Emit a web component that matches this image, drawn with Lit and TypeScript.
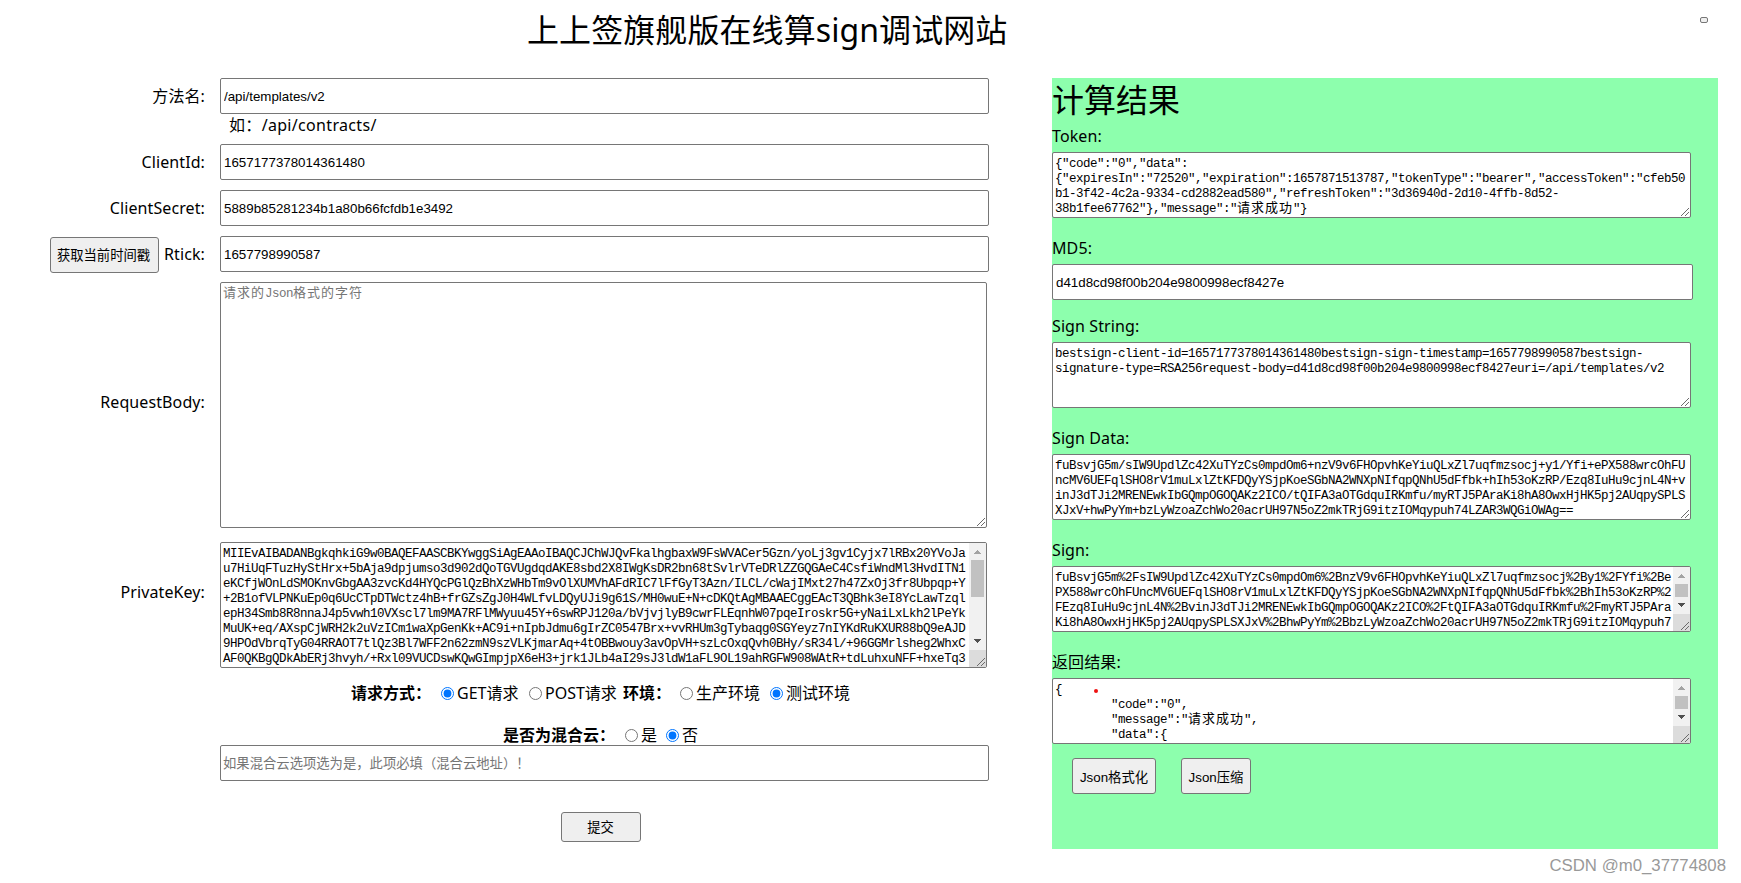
import { LitElement, html, css, svg, nothing } from "lit";
import { customElement, property } from "lit/decorators.js";

const PRIVATE_KEY = [
  "MIIEvAIBADANBgkqhkiG9w0BAQEFAASCBKYwggSiAgEAAoIBAQCJChWJQvFkalhgbaxW9FsWVACer5Gzn/yoLj3gv1Cyjx7lRBx20YVoJa",
  "u7HiUqFTuzHyStHrx+5bAja9dpjumso3d902dQoTGVUgdqdAKE8sbd2X8IWgKsDR2bn68tSvlrVTeDRlZZGQGAeC4CsfiWndMl3HvdITN1",
  "eKCfjWOnLdSMOKnvGbgAA3zvcKd4HYQcPGlQzBhXzWHbTm9vOlXUMVhAFdRIC7lFfGyT3Azn/ILCL/cWajIMxt27h47ZxOj3fr8Ubpqp+Y",
  "+2B1ofVLPNKuEp0q6UcCTpDTWctz4hB+frGZsZgJ0H4WLfvLDQyUJi9g61S/MH0wuE+N+cDKQtAgMBAAECggEAcT3QBhk3eI8YcLawTzql",
  "epH34Smb8R8nnaJ4p5vwh10VXscl7lm9MA7RFlMWyuu45Y+6swRPJ120a/bVjvjlyB9cwrFLEqnhW07pqeIroskr5G+yNaiLxLkh2lPeYk",
  "MuUK+eq/AXspCjWRH2k2uVzICm1waXpGenKk+AC9i+nIpbJdmu6gIrZC0547Brx+vvRHUm3gTybaqg0SGYeyz7nIYKdRuKXUR88bQ9eAJD",
  "9HPOdVbrqTyG04RRAOT7tlQz3Bl7WFF2n62zmN9szVLKjmarAq+4tOBBwouy3avOpVH+szLcOxqQvh0BHy/sR34l/+96GGMrlsheg2WhxC",
  "AF0QKBgQDkAbERj3hvyh/+Rxl09VUCDswKQwGImpjpX6eH3+jrk1JLb4aI29sJ3ldW1aFL9OL19ahRGFW908WAtR+tdLuhxuNFF+hxeTq3",
];

const TOKEN = [
  '{"code":"0","data":',
  '{"expiresIn":"72520","expiration":1657871513787,"tokenType":"bearer","accessToken":"cfeb50',
  'b1-3f42-4c2a-9334-cd2882ead580","refreshToken":"3d36940d-2d10-4ffb-8d52-',
  '38b1fee67762"},"message":"请求成功"}',
];

const SIGN_STRING = [
  "bestsign-client-id=1657177378014361480bestsign-sign-timestamp=1657798990587bestsign-",
  "signature-type=RSA256request-body=d41d8cd98f00b204e9800998ecf8427euri=/api/templates/v2",
];

const SIGN_DATA = [
  "fuBsvjG5m/sIW9UpdlZc42XuTYzCs0mpdOm6+nzV9v6FHOpvhKeYiuQLxZl7uqfmzsocj+y1/Yfi+ePX588wrcOhFU",
  "ncMV6UEFqlSHO8rV1muLxlZtKFDQyYSjpKoeSGbNA2WNXpNIfqpQNhU5dFfbk+hIh53oKzRP/Ezq8IuHu9cjnL4N+v",
  "inJ3dTJi2MRENEwkIbGQmpOGOQAKz2ICO/tQIFA3aOTGdquIRKmfu/myRTJ5PAraKi8hA8OwxHjHK5pj2AUqpySPLS",
  "XJxV+hwPyYm+bzLyWzoaZchWo20acrUH97N5oZ2mkTRjG9itzIOMqypuh74LZAR3WQGiOWAg==",
];

const SIGN = [
  "fuBsvjG5m%2FsIW9UpdlZc42XuTYzCs0mpdOm6%2BnzV9v6FHOpvhKeYiuQLxZl7uqfmzsocj%2By1%2FYfi%2Be",
  "PX588wrcOhFUncMV6UEFqlSHO8rV1muLxlZtKFDQyYSjpKoeSGbNA2WNXpNIfqpQNhU5dFfbk%2BhIh53oKzRP%2",
  "FEzq8IuHu9cjnL4N%2BvinJ3dTJi2MRENEwkIbGQmpOGOQAKz2ICO%2FtQIFA3aOTGdquIRKmfu%2FmyRTJ5PAra",
  "Ki8hA8OwxHjHK5pj2AUqpySPLSXJxV%2BhwPyYm%2BbzLyWzoaZchWo20acrUH97N5oZ2mkTRjG9itzIOMqypuh7",
];

const RESULT = ["{", '        "code":"0",', '        "message":"请求成功",', '        "data":{'];

const GRIP = [
  ...Array.from({ length: 8 }, (_, i) => [i, 7 - i]),
  ...Array.from({ length: 4 }, (_, i) => [4 + i, 7 - i]),
];

/** Multi-line text box with a resize grip and an optional scrollbar. */
@customElement("text-box")
export class TextBox extends LitElement {
  @property({ attribute: false }) lines: string[] = [];
  @property({ type: Boolean }) scroll = false;
  @property({ type: Boolean, reflect: true }) hint = false;

  static styles = css`
    :host {
      display: flex;
      box-sizing: border-box;
      border: 1px solid #767676;
      border-radius: 2px;
      background: #fff;
      position: relative;
      overflow: hidden;
      color: #000;
    }
    :host([hint]) {
      color: #757575;
    }
    .text {
      flex: 1;
      min-width: 0;
      padding: 4px 2px 0;
      font: 12.5px/15px "Liberation Mono", "Noto Sans CJK SC", monospace;
      letter-spacing: -0.5px;
    }
    .line {
      height: 15px;
      white-space: pre;
    }
    .cjk {
      font: 13px/1px "Noto Sans CJK SC", sans-serif;
      letter-spacing: 1px;
    }
    .bar {
      width: 17px;
      display: flex;
      flex-direction: column;
      background: #f1f1f1;
    }
    .arrow {
      display: block;
      width: 17px;
      height: 17px;
    }
    .track {
      flex: 1;
      padding: 0 2px;
    }
    .thumb {
      height: var(--thumb, 13px);
      background: #c1c1c1;
    }
    .corner {
      height: 17px;
      background: #dcdcdc;
    }
    .grip {
      position: absolute;
      right: 1px;
      bottom: 1px;
      width: 8px;
      height: 8px;
    }
  `;

  private segments(line: string) {
    return line
      .split(/([\u4e00-\u9fff]+)/)
      .map((part) => (/[\u4e00-\u9fff]/.test(part) ? html`<span class="cjk">${part}</span>` : part));
  }

  render() {
    return html`<div class="text">${this.lines.map((l) => html`<div class="line">${this.segments(l)}</div>`)}</div>
      ${this.scroll
        ? html`<div class="bar">
            <svg class="arrow" viewBox="0 0 17 17" shape-rendering="crispEdges" fill="#a3a3a3">
              <path d="M8 7h1v1h1v1h1v1h1v1H5v-1h1V9h1V8h1z" />
            </svg>
            <div class="track"><div class="thumb"></div></div>
            <svg class="arrow" viewBox="0 0 17 17" shape-rendering="crispEdges" fill="#505050">
              <path d="M5 6h7v1h-1v1h-1v1H9v1H8V9H7V8H6V7H5z" />
            </svg>
            <div class="corner"></div>
          </div>`
        : nothing}
      <svg class="grip" viewBox="0 0 8 8" shape-rendering="crispEdges" fill="#6b6b6b">
        ${GRIP.map(([x], i) => svg`<rect x=${x} y=${i < 8 ? 7 - x : 11 - x} width="1" height="1" />`)}
      </svg>`;
  }
}

@customElement("app-root")
export class AppRoot extends LitElement {
  static styles = css`
    :host {
      display: block;
      height: 883px;
      overflow: hidden;
      background: #fff;
      color: #000;
      font: 16px/22px "Noto Sans", "Noto Sans CJK SC", sans-serif;
    }
    * {
      box-sizing: border-box;
    }
    .header {
      height: 78px;
      display: flex;
      justify-content: space-between;
      align-items: flex-start;
      padding: 17px 33px 0 527px;
    }
    .title,
    .result-title {
      font: 400 32px/32px "Noto Sans", "Noto Sans CJK SC", sans-serif;
      white-space: nowrap;
    }
    .title {
      margin-top: -3px;
      letter-spacing: 0.08px;
    }
    .tiny {
      width: 8px;
      height: 6px;
      padding: 0;
      border: 1px solid #767676;
      border-radius: 2px;
      background: #efefef;
    }
    .main {
      display: flex;
      height: 771px;
    }
    .form {
      width: 1052px;
    }
    .row {
      display: grid;
      grid-template-columns: 205px 769px;
      column-gap: 15px;
      align-items: center;
      margin-bottom: 10px;
    }
    .row.method {
      margin-bottom: 0;
    }
    .row.body {
      margin-bottom: 14px;
    }
    .row.body .label {
      padding-bottom: 6px;
    }
    .row.key {
      margin-bottom: 0;
    }
    .row.key .label {
      padding-bottom: 26px;
    }
    .label {
      display: flex;
      justify-content: flex-end;
      align-items: center;
      gap: 5px;
      white-space: nowrap;
      letter-spacing: 0.1px;
    }
    .field {
      display: block;
      width: 100%;
      height: 36px;
      margin: 0;
      padding: 1px 3px;
      border: 1px solid #767676;
      border-radius: 2px;
      outline: none;
      background: #fff;
      color: #000;
      font: 13.333px "Liberation Sans", "Noto Sans CJK SC", sans-serif;
    }
    .field::placeholder {
      color: #757575;
    }
    .example {
      height: 30px;
      padding-left: 229px;
      line-height: 22px;
      letter-spacing: 0.32px;
    }
    .request {
      width: 767px;
      height: 246px;
    }
    .private {
      width: 767px;
      height: 126px;
      --thumb: 37px;
    }
    .button {
      height: 36px;
      padding: 1px 6px;
      border: 1px solid #767676;
      border-radius: 3px;
      background: #efefef;
      color: #000;
      font: 13.333px "Liberation Sans", "Noto Sans CJK SC", sans-serif;
      white-space: nowrap;
    }
    .stamp {
      width: 109px;
      padding: 0 7px 2px 5px;
      margin: 1px 0 -1px;
    }
    .options {
      display: flex;
      align-items: center;
      height: 50px;
      padding-left: 351px;
      white-space: nowrap;
    }
    .options.cloud {
      height: 27px;
      padding: 7px 0 0 503px;
    }
    .caption {
      font-weight: 700;
      width: 90px;
    }
    .caption.env {
      width: 57px;
      margin-left: 6px;
    }
    .caption.mixed {
      width: 122px;
    }
    .radio {
      width: 13px;
      height: 13px;
      margin: 0 3px 0 0;
    }
    .choice {
      display: flex;
      align-items: center;
      width: 88px;
    }
    .choice.wide {
      width: 90px;
    }
    .choice.short {
      width: 41px;
    }
    .address {
      margin-left: 220px;
      width: 769px;
      padding-left: 2px;
    }
    .submit {
      display: block;
      width: 80px;
      height: 30px;
      padding: 0 7px 1px 6px;
      margin: 31px 0 0 561px;
    }
    .result {
      width: 666px;
      background: #8dffad;
    }
    .result-title {
      height: 47px;
      padding-top: 6px;
    }
    .name {
      height: 27px;
      line-height: 22px;
      letter-spacing: 0.1px;
    }
    .output {
      width: 639px;
      height: 66px;
      margin-bottom: 19px;
    }
    .output.last {
      margin-bottom: 14px;
    }
    .digest {
      width: 641px;
      margin-bottom: 15px;
    }
    .actions {
      display: flex;
      gap: 25px;
      padding-left: 20px;
    }
    .format {
      width: 84px;
    }
    .compress {
      width: 70px;
    }
    .last-wrap {
      position: relative;
    }
    .dot {
      position: absolute;
      left: 42px;
      top: 11px;
      width: 4px;
      height: 4px;
      border-radius: 50%;
      background: #ee1111;
    }
    .footer {
      display: flex;
      justify-content: flex-end;
      padding: 7px 15px 0 0;
      color: #999;
      font: 16.8px/20px "Liberation Sans", sans-serif;
    }
  `;

  private radio(group: string, text: string, checked: boolean, size = "") {
    return html`<label class="choice ${size}"
      ><input class="radio" type="radio" name=${group} .checked=${checked} />${text}</label
    >`;
  }

  render() {
    return html`
      <div class="header">
        <div class="title">上上签旗舰版在线算sign调试网站</div>
        <button class="tiny"></button>
      </div>
      <div class="main">
        <div class="form">
          <div class="row method">
            <div class="label">方法名:</div>
            <input class="field" .value=${"/api/templates/v2"} />
          </div>
          <div class="example">如：/api/contracts/</div>
          <div class="row">
            <div class="label">ClientId:</div>
            <input class="field" .value=${"1657177378014361480"} />
          </div>
          <div class="row">
            <div class="label">ClientSecret:</div>
            <input class="field" .value=${"5889b85281234b1a80b66fcfdb1e3492"} />
          </div>
          <div class="row">
            <div class="label"><button class="button stamp">获取当前时间戳</button><span>Rtick:</span></div>
            <input class="field" .value=${"1657798990587"} />
          </div>
          <div class="row body">
            <div class="label">RequestBody:</div>
            <text-box class="request" hint .lines=${["请求的Json格式的字符"]}></text-box>
          </div>
          <div class="row key">
            <div class="label">PrivateKey:</div>
            <text-box class="private" scroll .lines=${PRIVATE_KEY}></text-box>
          </div>
          <div class="options">
            <span class="caption">请求方式：</span>
            ${this.radio("verb", "GET请求", true)} ${this.radio("verb", "POST请求", false)}
            <span class="caption env">环境：</span>
            ${this.radio("env", "生产环境", false, "wide")} ${this.radio("env", "测试环境", true)}
          </div>
          <div class="options cloud">
            <span class="caption mixed">是否为混合云：</span>
            ${this.radio("cloud", "是", false, "short")} ${this.radio("cloud", "否", true, "short")}
          </div>
          <input class="field address" placeholder="如果混合云选项选为是，此项必填（混合云地址）！" />
          <button class="button submit">提交</button>
        </div>
        <div class="result">
          <div class="result-title">计算结果</div>
          <div class="name">Token:</div>
          <text-box class="output" .lines=${TOKEN}></text-box>
          <div class="name">MD5:</div>
          <input class="field digest" .value=${"d41d8cd98f00b204e9800998ecf8427e"} />
          <div class="name">Sign String:</div>
          <text-box class="output" .lines=${SIGN_STRING}></text-box>
          <div class="name">Sign Data:</div>
          <text-box class="output" .lines=${SIGN_DATA}></text-box>
          <div class="name">Sign:</div>
          <text-box class="output" scroll .lines=${SIGN}></text-box>
          <div class="name">返回结果:</div>
          <div class="last-wrap">
            <text-box class="output last" scroll .lines=${RESULT}></text-box>
            <span class="dot"></span>
          </div>
          <div class="actions">
            <button class="button format">Json格式化</button>
            <button class="button compress">Json压缩</button>
          </div>
        </div>
      </div>
      <div class="footer">CSDN @m0_37774808</div>
    `;
  }
}
